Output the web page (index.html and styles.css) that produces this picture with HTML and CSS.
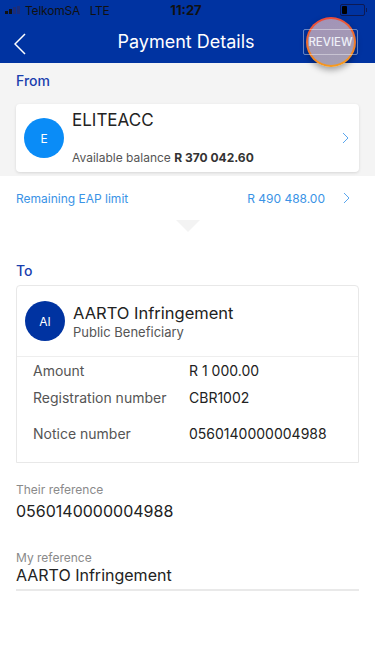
FILE: index.html
```html
<!DOCTYPE html>
<html lang="en">
<head>
  <meta charset="UTF-8" />
  <title>Payment Details</title>
  <link rel="stylesheet" href="styles.css">
</head>
<body>
  <header class="top">
    <!-- Status bar -->
    <div class="status">
      <div class="carrier">
        <span class="bars"><i></i><i></i><i class="off"></i><i class="off"></i></span>
        TelkomSA&nbsp;&nbsp;&nbsp;LTE
      </div>
      <div class="clock">11:27</div>
      <div class="battery-wrap">
        <span class="battery"><span class="level"></span></span><span class="nub"></span>
      </div>
    </div>

    <!-- Nav bar -->
    <div class="nav">
      <div class="nav-left">
        <svg class="back" width="12" height="22" viewBox="0 0 12 22"><path d="M11 1 L1 11 L11 21" fill="none" stroke="#fff" stroke-width="1.5"/></svg>
      </div>
      <h1>Payment Details</h1>
      <div class="nav-right">
        <span class="touch"></span>
        <button class="review">REVIEW</button>
      </div>
    </div>
  </header>

  <!-- From -->
  <section class="from">
    <h2 class="label">From</h2>
    <div class="card account">
      <div class="avatar light">E</div>
      <div class="acc-info">
        <div class="acc-name">ELITEACC</div>
        <div class="acc-bal">Available balance <b>R 370 042.60</b></div>
      </div>
      <svg class="chev" width="7" height="12" viewBox="0 0 7 12"><path d="M1 1 L6 6 L1 11" fill="none" stroke="#5aa6ee" stroke-width="1"/></svg>
    </div>
  </section>

  <div class="limit">
    <span>Remaining EAP limit</span>
    <span class="limit-val">R 490 488.00</span>
    <svg class="chev" width="7" height="12" viewBox="0 0 7 12"><path d="M1 1 L6 6 L1 11" fill="none" stroke="#5aa6ee" stroke-width="1"/></svg>
  </div>
  <div class="pointer"></div>

  <!-- To -->
  <section class="to">
    <h2 class="label">To</h2>
    <div class="bene">
      <div class="bene-head">
        <div class="avatar dark">AI</div>
        <div>
          <div class="acc-name small">AARTO Infringement</div>
          <div class="bene-type">Public Beneficiary</div>
        </div>
      </div>
      <div class="details">
        <div class="row"><span>Amount</span><span>R 1 000.00</span></div>
        <div class="row"><span>Registration number</span><span>CBR1002</span></div>
        <div class="row tall"><span>Notice number</span><span>0560140000004988</span></div>
      </div>
    </div>

    <div class="field">
      <div class="f-label">Their reference</div>
      <div class="f-value">0560140000004988</div>
    </div>
    <div class="field mine">
      <div class="f-label">My reference</div>
      <div class="f-value">AARTO Infringement</div>
    </div>
  </section>
</body>
</html>
```

FILE: styles.css
```css
body        {font-family: Inter, "Noto Sans", sans-serif; margin:0; background:#fff; color:#222; width:375px;}
.top        {background:#0033a1;}
.status     {height:20px; display:flex; align-items:center; padding:0 8px 0 5px; font-size:12px; color:#111;}
.carrier    {display:flex; align-items:center; gap:4px; flex:1; letter-spacing:-0.2px;}
.bars       {display:flex; align-items:flex-end; gap:1px; height:8px; margin-right:1px;}
.bars i     {width:3px; background:#111; display:block;}
.bars i:nth-child(1) {height:3px;}
.bars i:nth-child(2) {height:5px;}
.bars i:nth-child(3) {height:7px;}
.bars i:nth-child(4) {height:8px;}
.bars i.off {background:#1b2d7a;}
.clock      {font-weight:700; font-size:13px; flex:1; text-align:center;}
.battery-wrap {flex:1; display:flex; justify-content:flex-end; align-items:center;}
.battery    {width:21px; height:8px; border:1px solid #0d1a55; border-radius:2px; padding:1px; display:flex;}
.level      {width:5px; background:#000; border-radius:1px;}
.nub        {width:1px; height:4px; background:#0d1a55; margin-left:1px;}
.nav        {height:43px; display:grid; grid-template-columns:1fr auto 1fr; align-items:center; padding:0 17px 0 14px;}
.back       {display:block; margin-top:4px;}
.nav h1     {text-align:center; color:#fff; font-weight:400; font-size:18px; margin:0;}
.nav-right  {display:flex; justify-content:flex-end; position:relative;}
.review     {position:relative; font:500 11.5px Inter, sans-serif; color:#eef0f8; background:none; border:1px solid rgba(255,255,255,0.4); border-radius:2px; padding:5px 3px; width:55px;}
.touch      {position:absolute; right:2px; top:-12px; width:46px; height:46px; border-radius:50%; border:2px solid transparent;
             background:linear-gradient(rgba(150,160,205,0.85),rgba(150,160,205,0.85)) padding-box, linear-gradient(170deg,#e9443e,#f7a21b) border-box;
             box-shadow:0 3px 6px rgba(0,0,0,0.35);}
.from       {background:#f4f4f4; padding:9px 16px 4px;}
.label      {margin:0; font-size:14px; font-weight:500; color:#1a3fae;}
.card       {background:#fff; border-radius:4px; box-shadow:0 1px 3px rgba(0,0,0,0.12);}
.account    {margin-top:15px; height:68px; display:flex; align-items:center; padding:0 8px;}
.avatar     {width:40px; height:40px; border-radius:50%; color:#fff; font-size:12px; display:flex; align-items:center; justify-content:center; flex:none;}
.avatar.light {background:#0a8cf7;}
.avatar.dark  {background:#0033a1;}
.acc-info   {flex:1; margin-left:8px; align-self:stretch; display:flex; flex-direction:column; justify-content:space-between; padding:6px 0 7px;}
.acc-name   {font-size:17px; color:#222;}
.acc-name.small {font-size:16.5px;}
.acc-bal    {font-size:12px; color:#555;}
.acc-bal b  {color:#333;}
.chev       {margin-right:2px;}
.limit      {height:44px; display:flex; align-items:center; padding:0 23px 0 16px; font-size:12px; color:#3a93e6;}
.limit span:first-child {flex:1;}
.limit-val  {margin-right:18px;}
.pointer    {width:0; height:0; margin:0 auto; border-left:12px solid transparent; border-right:12px solid transparent; border-top:12px solid #f3f3f3;}
.to         {padding:30px 16px 0;}
.bene       {margin-top:6px; border:1px solid #e8e8e8; border-radius:4px 4px 0 0; height:176px;}
.bene-head  {display:flex; align-items:center; gap:8px; padding:0 8px; height:70px; border-bottom:1px solid #eee;}
.bene-type  {font-size:13px; color:#555; margin-top:1px;}
.details    {padding:0 0 0 16px;}
.row        {display:flex; font-size:14px; color:#444; height:27px; align-items:center;}
.row span:first-child {width:156px; color:#555;}
.row span:last-child  {color:#222;}
.row.tall   {height:44px;}
.field      {margin-top:19px;}
.f-label    {font-size:12px; color:#8a8a8a;}
.f-value    {font-size:16px; color:#222; margin-top:4px;}
.mine       {margin-top:29px; border-bottom:2px solid #e9e9e9; padding-bottom:4px;}
.mine .f-value {margin-top:0;}
```
